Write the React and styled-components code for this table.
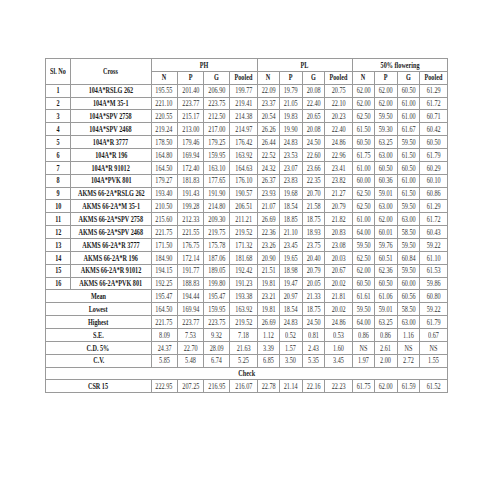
import React from 'react'
import styled, { createGlobalStyle } from 'styled-components'

const GlobalStyle = createGlobalStyle`
  html, body {
    margin: 0;
    padding: 0;
    background: #fff;
  }
  body {
    font-family: "Liberation Serif", "Times New Roman", serif;
    color: #222;
  }
`

const Page = styled.div`
  width: 495px;
  height: 495px;
  padding: 58px 0 0 45px;
  box-sizing: border-box;
`

const Table = styled.table`
  width: 402px;
  table-layout: fixed;
  border-collapse: collapse;
  border: 1.5px solid #6a6a6a;
  font-size: 8.6px;
`

const Cell = styled.td`
  height: 11.86px;
  padding: 0;
  border: 1px solid #9a9a9a;
  vertical-align: middle;
  line-height: 1;
  font-weight: ${p => (p.$bold ? 700 : 400)};
  color: ${p => (p.$bold ? '#1a1a1a' : '#333')};
  overflow: visible;
`

const Inner = styled.div`
  display: flex;
  justify-content: center;
  align-items: center;
  white-space: nowrap;
`

const Txt = styled.span`
  flex-shrink: 0;
  display: inline-block;
  transform: scaleX(0.72);
`

const widths = [25, 80.7, 26, 26.6, 26, 27.4, 22.6, 22.4, 22.3, 27.7, 22.3, 22.7, 22.6, 27.4]

const crosses = [
  ['1', '104A*RSLG 262', '195.55 201.40 206.90 199.77 22.09 19.79 20.08 20.75 62.00 62.00 60.50 61.29'],
  ['2', '104A*M 35-1', '221.10 223.77 223.75 219.41 23.37 21.05 22.40 22.10 62.00 62.00 61.00 61.72'],
  ['3', '104A*SPV 2758', '220.55 215.17 212.50 214.38 20.54 19.83 20.65 20.23 62.50 59.50 61.00 60.71'],
  ['4', '104A*SPV 2468', '219.24 213.00 217.00 214.97 26.26 19.90 20.08 22.40 61.50 59.30 61.67 60.42'],
  ['5', '104A*R 3777', '178.50 179.46 179.25 176.42 26.44 24.83 24.50 24.86 60.50 63.25 59.50 60.50'],
  ['6', '104A*R 196', '164.80 169.94 159.95 163.92 22.52 23.53 22.60 22.96 61.75 63.00 61.50 61.79'],
  ['7', '104A*R 91012', '164.50 172.40 163.10 164.63 24.32 23.07 23.66 23.41 61.00 60.50 60.50 60.29'],
  ['8', '104A*PVK 801', '179.27 181.83 177.65 176.10 26.37 23.83 22.35 23.82 60.00 60.36 61.00 60.10'],
  ['9', 'AKMS 66-2A*RSLG 262', '193.40 191.43 191.90 190.57 23.93 19.68 20.70 21.27 62.50 59.01 61.50 60.86'],
  ['10', 'AKMS 66-2A*M 35-1', '210.50 199.28 214.80 206.51 21.07 18.54 21.58 20.79 62.50 63.00 59.50 61.29'],
  ['11', 'AKMS 66-2A*SPV 2758', '215.60 212.33 209.30 211.21 26.69 18.85 18.75 21.82 61.00 62.00 63.00 61.72'],
  ['12', 'AKMS 66-2A*SPV 2468', '221.75 221.55 219.75 219.52 22.36 21.10 18.93 20.83 64.00 60.01 58.50 60.43'],
  ['13', 'AKMS 66-2A*R 3777', '171.50 176.75 175.78 171.32 23.26 23.45 23.75 23.08 59.50 59.76 59.50 59.22'],
  ['14', 'AKMS 66-2A*R 196', '184.90 172.14 187.06 181.68 20.90 19.65 20.40 20.03 62.50 60.51 60.84 61.10'],
  ['15', 'AKMS 66-2A*R 91012', '194.15 191.77 189.05 192.42 21.51 18.98 20.79 20.67 62.00 62.36 59.50 61.53'],
  ['16', 'AKMS 66-2A*PVK 801', '192.25 188.83 199.80 191.23 19.81 19.47 20.05 20.02 60.50 60.50 60.00 59.86']
]

const stats = [
  ['Mean', '195.47 194.44 195.47 193.38 23.21 20.97 21.33 21.81 61.61 61.06 60.56 60.80'],
  ['Lowest', '164.50 169.94 159.95 163.92 19.81 18.54 18.75 20.02 59.50 59.01 58.50 59.22'],
  ['Highest', '221.75 223.77 223.75 219.52 26.69 24.83 24.50 24.86 64.00 63.25 63.00 61.79'],
  ['S.E.', '8.09 7.53 9.32 7.18 1.12 0.52 0.81 0.53 0.86 0.86 1.16 0.67'],
  ['C.D. 5%', '24.37 22.70 28.09 21.63 3.39 1.57 2.43 1.60 NS 2.61 NS NS'],
  ['C.V.', '5.85 5.48 6.74 5.25 6.85 3.50 5.35 3.45 1.97 2.00 2.72 1.55']
]

const check = ['CSR 15', '222.95 207.25 216.95 216.07 22.78 21.14 22.16 22.23 61.75 62.00 61.59 61.52']

const groups = ['PH', 'PL', '50% flowering']
const subs = ['N', 'P', 'G', 'Pooled']

const C = ({ children, ...rest }) => (
  <Cell {...rest}><Inner><Txt>{children}</Txt></Inner></Cell>
)

const Values = ({ line }) =>
  line.split(' ').map((v, i) => <C key={i}>{v}</C>)

export default function App () {
  return (
    <Page>
      <GlobalStyle />
      <Table>
        <colgroup>
          {widths.map((w, i) => <col key={i} style={{ width: w }} />)}
        </colgroup>
        <thead>
          <tr>
            <C as='th' $bold rowSpan={2}>Sl. No</C>
            <C as='th' $bold rowSpan={2}>Cross</C>
            {groups.map(g => (
              <C as='th' $bold colSpan={4} key={g}>{g}</C>
            ))}
          </tr>
          <tr>
            {groups.map(g =>
              subs.map(s => <C as='th' $bold key={g + s}>{s}</C>)
            )}
          </tr>
        </thead>
        <tbody>
          {crosses.map(([no, name, line]) => (
            <tr key={no}>
              <C $bold>{no}</C>
              <C $bold>{name}</C>
              <Values line={line} />
            </tr>
          ))}
          {stats.map(([label, line]) => (
            <tr key={label}>
              <C $bold colSpan={2}>{label}</C>
              <Values line={line} />
            </tr>
          ))}
          <tr>
            <C $bold colSpan={14}>Check</C>
          </tr>
          <tr>
            <C $bold colSpan={2}>{check[0]}</C>
            <Values line={check[1]} />
          </tr>
        </tbody>
      </Table>
    </Page>
  )
}
